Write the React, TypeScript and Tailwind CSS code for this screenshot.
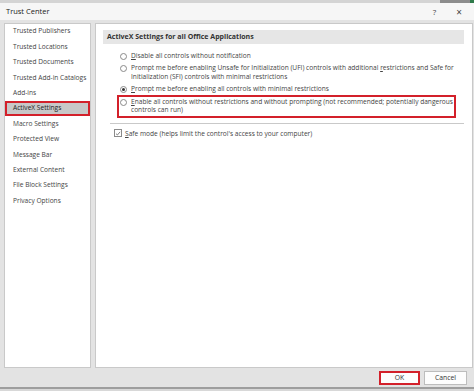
import React from 'react';

const navItems = [
  'Trusted Publishers',
  'Trusted Locations',
  'Trusted Documents',
  'Trusted Add-in Catalogs',
  'Add-ins',
  'ActiveX Settings',
  'Macro Settings',
  'Protected View',
  'Message Bar',
  'External Content',
  'File Block Settings',
  'Privacy Options',
];

function Radio({ checked }: { checked?: boolean }) {
  return (
    <span className="mt-[1px] flex h-[7px] w-[7px] shrink-0 items-center justify-center rounded-full border border-[#8a8a8a] bg-white">
      {checked && <span className="h-[3px] w-[3px] rounded-full bg-[#333]" />}
    </span>
  );
}

function U({ children }: { children: React.ReactNode }) {
  return <span className="underline underline-offset-1">{children}</span>;
}

export default function App() {
  return (
    <div
      className="relative flex h-[391px] w-[474px] flex-col overflow-hidden bg-[#e3e3e3] text-[#444]"
      style={{ fontFamily: '"Open Sans", "Noto Sans", sans-serif' }}
    >
      <div className="flex h-[3px] shrink-0">
        <div className="flex-1 bg-[#d4d4d4]" />
        <div className="w-[30px] bg-[#8c8c8c]" />
        <div className="w-[4px] bg-[#2f7a4a]" />
      </div>

      <div className="flex h-[17px] shrink-0 items-center justify-between bg-[#f6f6f6] pl-[6px] pr-[12px]">
        <span className="text-[7.5px] text-[#222]">Trust Center</span>
        <div className="flex items-center gap-[20px] text-[8px] text-[#444]">
          <span>?</span>
          <span className="text-[10px] leading-none">×</span>
        </div>
      </div>

      <div className="mt-[3px] flex h-[345px] shrink-0 gap-[4px] pl-[4px] pr-[3px]">
        <div className="w-[87px] shrink-0 border border-[#c9c9c9] bg-white">
          {navItems.map((item) => {
            const sel = item === 'ActiveX Settings';
            return (
              <div
                key={item}
                className={`flex h-[15.4px] items-center whitespace-nowrap text-[6.6px] leading-none ${
                  sel
                    ? 'border-2 border-[#d3202a] bg-[#c8c8c8] pl-[6px] text-[#222]'
                    : 'pl-[8px]'
                }`}
              >
                {item}
              </div>
            );
          })}
        </div>

        <div className="flex-1 border border-[#c9c9c9] bg-white pl-[7px] pr-[8px] pt-[6px]">
          <div className="flex h-[14px] items-center bg-[#e6e6e6] pl-[4px] text-[7px] font-bold text-[#333]">
            ActiveX Settings for all Office Applications
          </div>

          <div className="mt-[8px] flex flex-col whitespace-nowrap pl-[14px] text-[6.6px] leading-[8.5px]">
            <div className="flex items-start gap-[4px] px-[3px]">
              <Radio />
              <span>
                <U>D</U>isable all controls without notification
              </span>
            </div>
            <div className="mt-[3.5px] flex items-start gap-[4px] px-[3px]">
              <Radio />
              <span>
                Prompt me before enabling Unsafe for Initialization (UFI) controls with additional{' '}
                <U>r</U>estrictions and Safe for
                <br />
                Initialization (SFI) controls with minimal restrictions
              </span>
            </div>
            <div className="mt-[4px] flex items-start gap-[4px] px-[3px]">
              <Radio checked />
              <span>
                <U>P</U>rompt me before enabling all controls with minimal restrictions
              </span>
            </div>
            <div className="mr-[8px] mt-[1px] flex items-start gap-[4px] border-2 border-[#d3202a] p-[1px]">
              <Radio />
              <span>
                <U>E</U>nable all controls without restrictions and without prompting (not recommended; potentially dangerous
                <br />
                controls can run)
              </span>
            </div>
          </div>

          <div className="ml-[7px] mt-[5px] h-px bg-[#c9c9c9]" />

          <div className="ml-[11px] mt-[5px] flex items-center gap-[3px] whitespace-nowrap text-[6.6px]">
            <span className="flex h-[8px] w-[8px] items-center justify-center border border-[#8a8a8a] bg-white">
              <svg viewBox="0 0 8 8" className="h-[7px] w-[7px]">
                <path d="M1.3 4.2 L3.2 6 L6.8 1.8" fill="none" stroke="#444" strokeWidth="0.9" />
              </svg>
            </span>
            <span>
              <U>S</U>afe mode (helps limit the control's access to your computer)
            </span>
          </div>
        </div>
      </div>

      <div className="flex flex-1 justify-end gap-[4px] pr-[7px] pt-[3px]">
        <button className="flex h-[14px] w-[41px] items-center justify-center border-2 border-[#d3202a] bg-[#fdfdfd] text-[6.8px] text-[#333]">
          OK
        </button>
        <button className="flex h-[14px] w-[43px] items-center justify-center border border-[#bdbdbd] bg-[#fdfdfd] text-[6.8px] text-[#333]">
          Cancel
        </button>
      </div>
      <div className="h-[2px] bg-[#9e9e9e]" />
      <div className="h-[2px] bg-[#d8d8d8]" />
    </div>
  );
}
